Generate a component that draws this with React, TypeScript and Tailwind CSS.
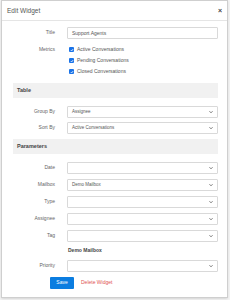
import React from "react";

const Chevron = () => (
  <svg width="4" height="3" viewBox="0 0 10 8" className="absolute right-[4px] top-1/2 -translate-y-1/2">
    <path d="M1 2 L5 6 L9 2" stroke="#555" strokeWidth="2.2" fill="none" />
  </svg>
);

const Select = ({ value = "" }: { value?: string }) => (
  <div className="relative h-[12px] w-[151px] rounded-[1px] border border-[#d9d9d9] bg-white pl-[4px] text-[4.5px] leading-[10px] text-[#555]">
    {value}
    <Chevron />
  </div>
);

const Row = ({ label, children, h = 12 }: { label: string; children: React.ReactNode; h?: number }) => (
  <div className="flex items-center" style={{ minHeight: h }}>
    <div className="w-[42px] text-right text-[5px] text-[#666]">{label}</div>
    <div className="ml-[12px]">{children}</div>
  </div>
);

const Check = ({ label }: { label: string }) => (
  <div className="flex items-center gap-[3px] h-[11px]">
    <div className="flex h-[5px] w-[5px] items-center justify-center rounded-[1px] bg-[#1a73e8]">
      <svg width="4" height="4" viewBox="0 0 10 10">
        <path d="M2 5 L4 7.5 L8 2.5" stroke="white" strokeWidth="1.8" fill="none" />
      </svg>
    </div>
    <span className="text-[5px] text-[#555]">{label}</span>
  </div>
);

const Section = ({ title }: { title: string }) => (
  <div className="flex h-[15px] items-center bg-[#f1f1f1] pl-[4px] text-[5.5px] font-bold text-[#444]">{title}</div>
);

export default function App() {
  return (
    <div className="h-[300px] w-[230px] bg-[#f5f5f5] pl-[1px]" style={{ fontFamily: "'Liberation Sans', Arial, sans-serif" }}>
      <div className="h-[298px] w-[227px] border border-[#cfcfcf] bg-white shadow-sm">
        <div className="flex h-[20px] items-center justify-between border-b border-[#e5e5e5] pl-[5px] pr-[5px]">
          <span className="text-[6.5px] text-[#555]">Edit Widget</span>
          <span className="text-[7px] font-bold leading-none text-[#444]">×</span>
        </div>
        <div className="pl-[11px] pr-[9px] pt-[6px]">
          <Row label="Title">
            <div className="h-[12px] w-[151px] rounded-[1px] border border-[#d9d9d9] pl-[4px] text-[5px] leading-[10px] text-[#555]">Support Agents</div>
          </Row>
          <div className="mt-[5px] flex">
            <div className="w-[42px] pt-[2px] text-right text-[5px] text-[#666]">Metrics</div>
            <div className="ml-[14px]">
              <Check label="Active Conversations" />
              <Check label="Pending Conversations" />
              <Check label="Closed Conversations" />
            </div>
          </div>
          <div className="mt-[6px]">
            <Section title="Table" />
          </div>
          <div className="mt-[8px] flex flex-col gap-[4px]">
            <Row label="Group By"><Select value="Assignee" /></Row>
            <Row label="Sort By"><Select value="Active Conversations" /></Row>
          </div>
          <div className="mt-[5px]">
            <Section title="Parameters" />
          </div>
          <div className="mt-[8px] flex flex-col gap-[5px]">
            <Row label="Date"><Select /></Row>
            <Row label="Mailbox"><Select value="Demo Mailbox" /></Row>
            <Row label="Type"><Select /></Row>
            <Row label="Assignee"><Select /></Row>
            <Row label="Tag"><Select /></Row>
          </div>
          <div className="ml-[55px] mt-[5px] text-[5px] font-bold text-[#444]">Demo Mailbox</div>
          <div className="mt-[5px]">
            <Row label="Priority"><Select /></Row>
          </div>
          <div className="ml-[37px] mt-[5px] flex items-center gap-[7px]">
            <div className="flex h-[12px] w-[24px] items-center justify-center rounded-[1px] bg-[#0b7de0] text-[5px] text-white">Save</div>
            <span className="text-[5px] text-[#e05252]">Delete Widget</span>
          </div>
        </div>
      </div>
    </div>
  );
}
